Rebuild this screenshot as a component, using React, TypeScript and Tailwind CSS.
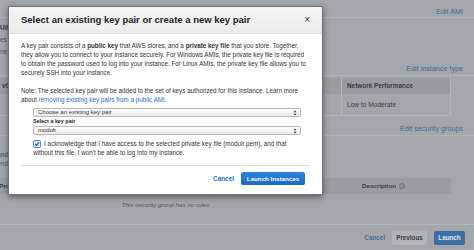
import React from "react";

function SelectBox({ label }: { label: string }) {
  return (
    <div className="flex h-[9px] items-center justify-between rounded-[2px] border border-[#b9b9b9] bg-gradient-to-b from-white to-[#e9e9e9] pl-[4px] pr-[3px] text-[6px] leading-[7px] text-[#333]">
      <span>{label}</span>
      <svg width="4" height="6" viewBox="0 0 4 6">
        <path d="M0.5 2.3 L2 0.6 L3.5 2.3 Z M0.5 3.7 L2 5.4 L3.5 3.7 Z" fill="#333" />
      </svg>
    </div>
  );
}

export default function App() {
  return (
    <div className="relative h-[250px] w-[474px] overflow-hidden bg-[#a3a6ab] font-['Liberation_Sans',Arial,sans-serif] text-[#3d4045]">
      {/* Background page (dimmed) */}
      <div className="flex flex-col">
        <div className="flex h-[18px] items-end justify-end border-b border-[#b1b4b8] pb-[1px] pr-[11px] text-[7.2px] leading-[9px] text-[#4f6a8d]">
          Edit AMI
        </div>
        <div className="flex h-[58px] border-b border-[#b1b4b8]">
          <div className="flex flex-col pt-[4px] text-[6.5px] leading-[12px] text-[#4a4d52]">
            <span className="-ml-[2px] font-bold">AMI</span>
            <span>es</span>
            <span>ne:</span>
          </div>
          <div className="ml-auto mt-auto pb-[2px] pr-[11px] text-[7.2px] leading-[9px] text-[#4f6a8d]">
            Edit instance type
          </div>
        </div>
        <div className="mt-[2px] flex w-[451px] flex-col border-r border-[#b1b4b8]">
          <div className="flex h-[16px] bg-[#989ba0] text-[6.4px] font-bold leading-[16px] text-[#3a3d42]">
            <span className="pl-[2px]">vCPUs</span>
            <span className="ml-auto w-[109px] border-l border-[#b1b4b8] pl-[5px]">Network Performance</span>
          </div>
          <div className="flex h-[22px] border-b border-[#b1b4b8] text-[6.6px] leading-[22px] text-[#3d4045]">
            <span className="pl-[10px]">1</span>
            <span className="ml-auto w-[109px] border-l border-[#b1b4b8] pl-[5px]">Low to Moderate</span>
          </div>
        </div>
        <div className="flex h-[20px] items-end justify-end border-b border-[#afb2b6] pb-[2px] pr-[11px] text-[7.2px] leading-[9px] text-[#4f6a8d]">
          Edit security groups
        </div>
        <div className="flex h-[42px] flex-col pt-[14px] text-[6.5px] leading-[9px] text-[#4a4d52]">
          <span className="-ml-[3px]">and</span>
          <span className="-ml-[3px]">end</span>
        </div>
        <div className="flex w-[451px] flex-col">
          <div className="flex h-[16px] items-center bg-[#999ca1] text-[6.2px] font-bold text-[#3a3d42]">
            <span className="-ml-[1px]">Pro</span>
            <span className="ml-auto flex w-[109px] items-center gap-[3px] pl-[20px]">
              Description
              <span className="flex h-[6px] w-[6px] items-center justify-center rounded-full border border-[#6b6e73] text-[4px] font-normal leading-none">i</span>
            </span>
          </div>
          <div className="flex h-[30px] justify-center pr-[120px] pt-[6px] text-[6.2px] italic leading-[9px] text-[#55585d]">
            This security group has no rules
          </div>
        </div>
        <div className="flex h-[27px] items-center justify-end gap-[7px] border-t border-[#b1b4b8] pr-[9px] text-[6.3px] font-bold">
          <span className="text-[#4f6a8d]">Cancel</span>
          <span className="flex h-[14px] w-[35px] items-center justify-center rounded-[2px] bg-[#b2b4b8] text-[#3a3d42]">Previous</span>
          <span className="flex h-[14px] w-[31px] items-center justify-center rounded-[2px] bg-[#3d6fa4] text-[#dfe6ee]">Launch</span>
        </div>
      </div>

      {/* Modal */}
      <div className="absolute left-[8px] top-[6px] w-[315px] border border-[#717378] bg-white shadow-[0_2px_6px_rgba(0,0,0,0.45)]">
        <div className="flex h-[27px] items-center justify-between border-b border-[#dadada] bg-gradient-to-b from-[#f4f4f4] to-[#ececec] pl-[12px] pr-[12px]">
          <span className="text-[9.5px] font-bold leading-none text-[#222]">
            Select an existing key pair or create a new key pair
          </span>
          <span className="text-[10px] leading-none text-[#333]">×</span>
        </div>
        <div className="px-[12px] pt-[7px] text-[6.3px] leading-[9px] text-[#333]">
          <p className="whitespace-nowrap">
            A key pair consists of a <b>public key</b> that AWS stores, and a <b>private key file</b> that you store. Together,
            <br />
            they allow you to connect to your instance securely. For Windows AMIs, the private key file is required
            <br />
            to obtain the password used to log into your instance. For Linux AMIs, the private key file allows you to
            <br />
            securely SSH into your instance.
          </p>
          <p className="mt-[9px] whitespace-nowrap">
            Note: The selected key pair will be added to the set of keys authorized for this instance. Learn more
            <br />
            about <span className="text-[#1f6fc5]">removing existing key pairs from a public AMI</span>.
          </p>
          <div className="ml-[12px] mt-[4px] w-[268px]">
            <SelectBox label="Choose an existing key pair" />
            <div className="text-[5.4px] font-bold leading-[9px] text-[#222]">Select a key pair</div>
            <SelectBox label="modulr" />
          </div>
          <div className="ml-[12px] mt-[4px] whitespace-nowrap">
            <div className="flex items-center gap-[3px]">
              <span className="flex h-[8px] w-[8px] items-center justify-center rounded-[1.5px] border border-[#4f86cf] bg-[#d9e7f8]">
                <svg width="6" height="6" viewBox="0 0 6 6">
                  <path d="M1.2 3.2 L2.5 4.4 L4.8 1.4" stroke="#1d4f8f" strokeWidth="1.1" fill="none" />
                </svg>
              </span>
              <span>I acknowledge that I have access to the selected private key file (modulr.pem), and that</span>
            </div>
            <div>without this file, I won&apos;t be able to log into my instance.</div>
          </div>
          <div className="mt-[8px] border-t border-[#dedede]" />
          <div className="flex items-center justify-end gap-[7px] pb-[9px] pr-[5px] pt-[6px]">
            <span className="text-[6.4px] font-bold text-[#1f6fc5]">Cancel</span>
            <span className="flex h-[13px] w-[64px] items-center justify-center rounded-[2px] bg-gradient-to-b from-[#2f83dc] to-[#1a6ac3] text-[6.2px] font-bold text-white">
              Launch Instances
            </span>
          </div>
        </div>
      </div>
    </div>
  );
}
